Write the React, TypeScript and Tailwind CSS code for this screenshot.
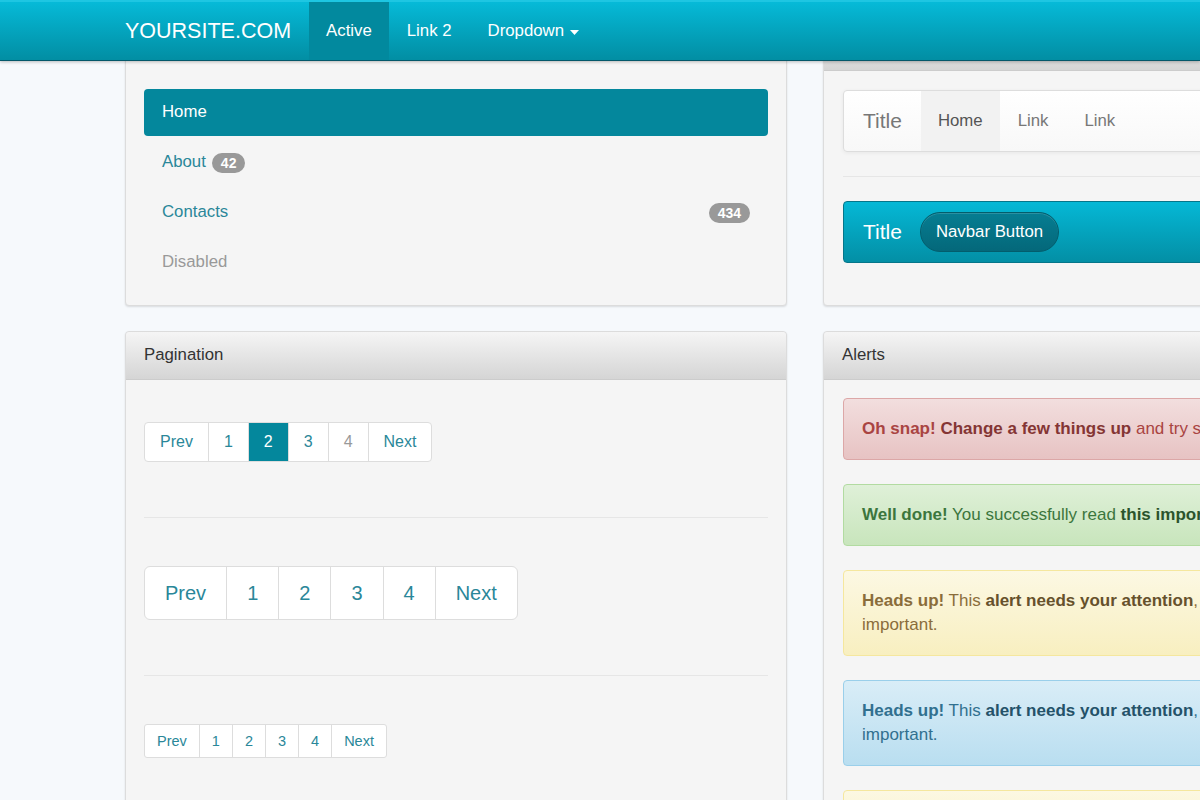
import React from "react";

const font = { fontFamily: '"Liberation Sans", Arial, sans-serif' };

type PageItem = { label: string; active?: boolean; disabled?: boolean };

const pages: PageItem[] = [
  { label: "Prev" },
  { label: "1" },
  { label: "2", active: true },
  { label: "3" },
  { label: "4", disabled: true },
  { label: "Next" },
];

const plainPages: PageItem[] = [
  { label: "Prev" },
  { label: "1" },
  { label: "2" },
  { label: "3" },
  { label: "4" },
  { label: "Next" },
];

const sizes = {
  md: { item: "h-[38px] px-[15px] text-[16px]", round: "rounded-[4px]" },
  lg: { item: "h-[52px] px-[20px] text-[20px]", round: "rounded-[6px]" },
  sm: { item: "h-[32px] px-[12px] text-[14.5px]", round: "rounded-[3px]" },
};

const Pagination: React.FC<{ items: PageItem[]; size: "md" | "lg" | "sm" }> = ({
  items,
  size,
}) => (
  <div className={`flex w-fit overflow-hidden ${sizes[size].round} border border-[#dddddd] bg-white`}>
    {items.map((p, i) => (
      <span
        key={i}
        className={[
          "flex items-center",
          sizes[size].item,
          i > 0 ? "border-l border-[#dddddd]" : "",
          p.active
            ? "bg-[#04879c] text-white border-[#04879c]"
            : p.disabled
              ? "text-[#999999]"
              : "text-[#2a8799]",
        ].join(" ")}
      >
        {p.label}
      </span>
    ))}
  </div>
);

const PanelHeading: React.FC<{ title: string }> = ({ title }) => (
  <div className="h-[48px] flex items-center px-[18px] bg-linear-to-b from-[#f5f5f5] to-[#d5d5d5] border-b border-[#cccccc] rounded-t-[4px] text-[16.8px] text-[#333333]">
    {title}
  </div>
);

const Panel: React.FC<{ className?: string; children: React.ReactNode }> = ({
  className = "",
  children,
}) => (
  <div
    className={`bg-[#f5f5f5] border border-[#dcdcdc] rounded-[4px] shadow-[0_1px_2px_rgba(0,0,0,0.12)] shrink-0 ${className}`}
  >
    {children}
  </div>
);

const Hr = () => <div className="h-px bg-[#e6e6e6]" />;

const Badge: React.FC<{ children: React.ReactNode }> = ({ children }) => (
  <span className="inline-flex items-center h-[20px] px-[9px] rounded-[10px] bg-[#999999] text-white text-[14px] font-bold">
    {children}
  </span>
);

const alerts = [
  {
    box: "from-[#f2dede] to-[#e7c3c3] border-[#dca7a7] text-[#a94442]",
    strong: "text-[#a94442]",
    link: "text-[#843534]",
    lead: "Oh snap!",
    parts: [" ", "Change a few things up", " and try submitting again."],
  },
  {
    box: "from-[#dff0d8] to-[#c8e5bc] border-[#b2dba1] text-[#3c763d]",
    strong: "text-[#3c763d]",
    link: "text-[#2b542c]",
    lead: "Well done!",
    parts: [" You successfully read ", "this important alert message", "."],
  },
  {
    box: "from-[#fcf8e3] to-[#f8efc0] border-[#f5e79e] text-[#8a6d3b]",
    strong: "text-[#8a6d3b]",
    link: "text-[#66512c]",
    lead: "Heads up!",
    parts: [" This ", "alert needs your attention", ", but it's not super important."],
  },
  {
    box: "from-[#d9edf7] to-[#b9def0] border-[#9acfea] text-[#31708f]",
    strong: "text-[#31708f]",
    link: "text-[#245269]",
    lead: "Heads up!",
    parts: [" This ", "alert needs your attention", ", but it's not super important."],
  },
  {
    box: "from-[#fcf8e3] to-[#f8efc0] border-[#f5e79e] text-[#8a6d3b]",
    strong: "text-[#8a6d3b]",
    link: "text-[#66512c]",
    lead: "Warning!",
    parts: [" Best check yo self, ", "you're not looking", " too good."],
  },
];

export default function App() {
  return (
    <div className="h-[800px] w-[1200px] overflow-hidden bg-[#f6f9fc] text-[16.8px] leading-[1.43]" style={font}>
      {/* Navbar */}
      <header className="h-[61px] bg-linear-to-b from-[#06bad8] to-[#028ea3] border-t-2 border-t-[#1ec6e2] border-b border-b-[#04586a] shadow-[0_1px_3px_rgba(0,0,0,0.25)] relative z-10">
        <nav className="flex h-full pl-[125px] text-white">
          <span className="flex items-center pr-[18px] text-[21.5px]">YOURSITE.COM</span>
          <span className="flex items-center px-[17px] bg-[#02899e]">Active</span>
          <span className="flex items-center px-[18px]">Link 2</span>
          <span className="flex items-center px-[18px] gap-[6px]">
            Dropdown
            <svg width="9" height="5" viewBox="0 0 9 5" className="mt-[2px]">
              <path d="M0 0h9L4.5 5z" fill="white" />
            </svg>
          </span>
        </nav>
      </header>

      {/* Content */}
      <main className="pl-[125px]">
        {/* Row 1 */}
        <div className="flex gap-[36px] -mt-[39px] items-start">
          <Panel className="w-[662px]">
            <div className="px-[18px] pt-[66px] pb-[19px] flex flex-col gap-[3px]">
              <div className="h-[47px] flex items-center px-[18px] rounded-[4px] bg-[#04879c] text-white">
                Home
              </div>
              <div className="h-[47px] flex items-center gap-[6px] px-[18px] text-[#2a8799]">
                About <Badge>42</Badge>
              </div>
              <div className="h-[47px] flex items-center justify-between px-[18px] text-[#2a8799]">
                Contacts <Badge>434</Badge>
              </div>
              <div className="h-[47px] flex items-center px-[18px] text-[#999999]">Disabled</div>
            </div>
          </Panel>

          <Panel className="w-[600px]">
            <PanelHeading title="Navbars" />
            <div className="px-[19px] pt-[19px] pb-[42px]">
              <div className="h-[62px] flex items-stretch rounded-[4px] border border-[#dddddd] bg-linear-to-b from-white to-[#f8f8f8] shadow-[0_1px_4px_rgba(0,0,0,0.06)]">
                <span className="flex items-center pl-[19px] pr-[19px] text-[21px] text-[#777777]">Title</span>
                <span className="flex items-center px-[17px] bg-[#f2f2f2] text-[#555555]">Home</span>
                <span className="flex items-center px-[18px] text-[#777777]">Link</span>
                <span className="flex items-center px-[18px] text-[#777777]">Link</span>
              </div>
              <div className="my-[24px]">
                <Hr />
              </div>
              <div className="h-[62px] flex items-center rounded-[4px] border border-[#05768a] bg-linear-to-b from-[#05b8d6] to-[#038fa5] px-[19px] gap-[18px]">
                <span className="text-[21px] text-white">Title</span>
                <span className="h-[40px] flex items-center px-[15px] rounded-full border border-[#035d6c] bg-linear-to-b from-[#067d92] to-[#04687a] text-white shadow-[inset_0_1px_0_rgba(255,255,255,0.15)]">
                  Navbar Button
                </span>
              </div>
            </div>
          </Panel>
        </div>

        {/* Row 2 */}
        <div className="flex gap-[36px] mt-[25px] items-start">
          <Panel className="w-[662px]">
            <PanelHeading title="Pagination" />
            <div className="px-[18px] pt-[42px] pb-[60px]">
              <Pagination items={pages} size="md" />
              <div className="mt-[55px] mb-[48px]">
                <Hr />
              </div>
              <Pagination items={plainPages} size="lg" />
              <div className="mt-[55px] mb-[48px]">
                <Hr />
              </div>
              <Pagination items={plainPages} size="sm" />
            </div>
          </Panel>

          <Panel className="w-[600px]">
            <PanelHeading title="Alerts" />
            <div className="px-[19px] pt-[18px] pb-[19px] flex flex-col gap-[24px]">
              {alerts.map((a, i) => (
                <div
                  key={i}
                  className={`rounded-[4px] border bg-linear-to-b px-[18px] py-[18px] leading-[24px] text-[17px] ${a.box}`}
                >
                  <strong className={`font-bold ${a.strong}`}>{a.lead}</strong>
                  {a.parts[0]}
                  <strong className={`font-bold ${a.link}`}>{a.parts[1]}</strong>
                  {a.parts[2]}
                </div>
              ))}
            </div>
          </Panel>
        </div>
      </main>
    </div>
  );
}
